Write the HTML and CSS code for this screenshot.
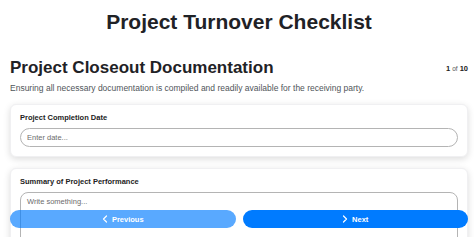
FILE: index.html
```html
<!DOCTYPE html>
<html lang="en">
<head>
    <meta charset="UTF-8">
    <meta name="viewport" content="width=device-width, initial-scale=1.0">
    <title>Project Turnover Checklist</title>
    <link rel="stylesheet" href="styles.css">
</head>
<body>
    <div class="container">
        <h1>Project Turnover Checklist</h1>

        <div class="section-head">
            <h2>Project Closeout Documentation</h2>
            <div class="step-count"><b>1</b> <span>of</span> <b>10</b></div>
        </div>
        <p class="section-desc">Ensuring all necessary documentation is compiled and readily available for the receiving party.</p>

        <div class="card">
            <label for="completionDate">Project Completion Date</label>
            <input type="text" id="completionDate" class="field" placeholder="Enter date...">
        </div>

        <div class="card">
            <label for="performance">Summary of Project Performance</label>
            <textarea id="performance" class="field field-area" placeholder="Write something..."></textarea>
        </div>
    </div>

    <div class="nav-buttons">
        <button class="nav-btn prev-btn" disabled>
            <svg width="6" height="8" viewBox="0 0 6 8"><path d="M4.5 1 L1.5 4 L4.5 7" fill="none" stroke="white" stroke-width="1.2" stroke-linecap="round" stroke-linejoin="round"/></svg>
            Previous
        </button>
        <button class="nav-btn next-btn">
            <svg width="6" height="8" viewBox="0 0 6 8"><path d="M1.5 1 L4.5 4 L1.5 7" fill="none" stroke="white" stroke-width="1.2" stroke-linecap="round" stroke-linejoin="round"/></svg>
            Next
        </button>
    </div>
</body>
</html>
```

FILE: styles.css
```css
body {
    font-family: "Liberation Sans", Arial, sans-serif;
    margin: 0;
    padding: 0;
    background-color: #ffffff;
    color: #212529;
}

.container {
    padding: 10px 6px 60px 10px;
}

h1 {
    margin: 0;
    text-align: center;
    font-size: 21px;
    line-height: 24px;
    font-weight: bold;
    color: #1f2226;
}

.section-head {
    display: flex;
    justify-content: space-between;
    align-items: center;
    margin-top: 24px;
}

h2 {
    margin: 0;
    font-size: 17px;
    line-height: 20px;
    font-weight: bold;
    color: #1f2226;
}

.step-count {
    font-size: 7.5px;
    color: #222;
}

.step-count span {
    font-size: 6.5px;
    color: #555;
}

.section-desc {
    margin: 3px 0 0 0;
    font-size: 8.5px;
    line-height: 14px;
    color: #50555a;
}

.card {
    margin-top: 9px;
    padding: 8px 9px 9px 9px;
    background-color: white;
    border: 1px solid #f0f0f2;
    border-radius: 6px;
    box-shadow: 0 2px 7px rgba(0, 0, 0, 0.14);
}

.card + .card {
    margin-top: 11px;
}

.card label {
    display: block;
    font-size: 7.5px;
    line-height: 10px;
    font-weight: bold;
    color: #222;
    margin-bottom: 5px;
}

.field {
    display: block;
    box-sizing: border-box;
    width: 100%;
    height: 19px;
    padding: 0 6px;
    font-family: inherit;
    font-size: 7.5px;
    color: #333;
    border: 1px solid #b4b4b4;
    border-radius: 10px;
    background: white;
    outline: none;
}

.field::placeholder {
    color: #6c6c6c;
}

.field-area {
    height: 60px;
    padding: 4px 6px;
    border-radius: 8px;
    resize: none;
}

.nav-buttons {
    position: fixed;
    left: 10px;
    right: 6px;
    bottom: 9px;
    display: flex;
    gap: 7px;
}

.nav-btn {
    flex: 1;
    display: flex;
    justify-content: center;
    align-items: center;
    gap: 4px;
    height: 18px;
    padding: 0;
    border: none;
    border-radius: 9px;
    background-color: #007bff;
    color: white;
    font-family: inherit;
    font-size: 7.5px;
    font-weight: bold;
    cursor: pointer;
}

.prev-btn:disabled {
    opacity: 0.65;
    cursor: default;
}
```
